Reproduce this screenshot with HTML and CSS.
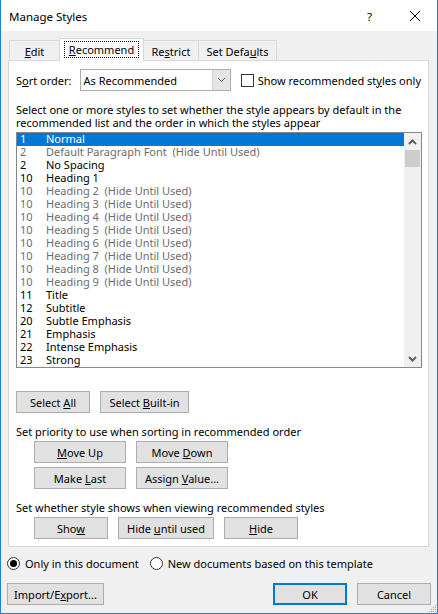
FILE: index.html
```html
<!DOCTYPE html>
<html>
<head>
<meta charset="utf-8">
<link rel="stylesheet" href="styles.css">
</head>
<body>
<div class="window">
  <div class="titlebar">
    <span class="title">Manage Styles</span>
    <span class="help">?</span>
    <svg class="close" width="12" height="12" viewBox="0 0 12 12"><path d="M1 1L11 11M11 1L1 11" stroke="#000" stroke-width="1" fill="none"/></svg>
  </div>
  <div class="tabs">
    <div class="tab"><span><u>E</u>dit</span></div>
    <div class="tab active"><span class="focus"><u>R</u>ecommend</span></div>
    <div class="tab"><span>Re<u>s</u>trict</span></div>
    <div class="tab"><span>Set Defa<u>u</u>lts</span></div>
  </div>
  <div class="panel">
    <div class="sort-row">
      <span class="sort-label">S<u>o</u>rt order:</span>
      <div class="select">
        <span class="select-value">As Recommended</span>
        <span class="select-btn"><svg width="9" height="6" viewBox="0 0 9 6"><path d="M1 1L4.5 4.5L8 1" stroke="#5a5a5a" stroke-width="1" fill="none"/></svg></span>
      </div>
      <span class="checkbox"></span>
      <span class="check-label">Show recommended st<u>y</u>les only</span>
    </div>
    <p class="desc">Select one or more styles to set whether the style appears by default in the<br>recommended list and the order in which the styles appear</p>
    <div class="listbox">
      <div class="rows">
        <div class="row selected"><span class="num">1</span><span class="name">Normal</span></div>
        <div class="row gray"><span class="num">2</span><span class="name">Default Paragraph Font  (Hide Until Used)</span></div>
        <div class="row"><span class="num">2</span><span class="name">No Spacing</span></div>
        <div class="row"><span class="num">10</span><span class="name">Heading 1</span></div>
        <div class="row gray"><span class="num">10</span><span class="name">Heading 2  (Hide Until Used)</span></div>
        <div class="row gray"><span class="num">10</span><span class="name">Heading 3  (Hide Until Used)</span></div>
        <div class="row gray"><span class="num">10</span><span class="name">Heading 4  (Hide Until Used)</span></div>
        <div class="row gray"><span class="num">10</span><span class="name">Heading 5  (Hide Until Used)</span></div>
        <div class="row gray"><span class="num">10</span><span class="name">Heading 6  (Hide Until Used)</span></div>
        <div class="row gray"><span class="num">10</span><span class="name">Heading 7  (Hide Until Used)</span></div>
        <div class="row gray"><span class="num">10</span><span class="name">Heading 8  (Hide Until Used)</span></div>
        <div class="row gray"><span class="num">10</span><span class="name">Heading 9  (Hide Until Used)</span></div>
        <div class="row"><span class="num">11</span><span class="name">Title</span></div>
        <div class="row"><span class="num">12</span><span class="name">Subtitle</span></div>
        <div class="row"><span class="num">20</span><span class="name">Subtle Emphasis</span></div>
        <div class="row"><span class="num">21</span><span class="name">Emphasis</span></div>
        <div class="row"><span class="num">22</span><span class="name">Intense Emphasis</span></div>
        <div class="row"><span class="num">23</span><span class="name">Strong</span></div>
      </div>
      <div class="scrollbar">
        <span class="arrow"><svg width="9" height="6" viewBox="0 0 9 6"><path d="M1 5L4.5 1.5L8 5" stroke="#606060" stroke-width="2" fill="none"/></svg></span>
        <span class="thumb"></span>
        <span class="track"></span>
        <span class="arrow"><svg width="9" height="6" viewBox="0 0 9 6"><path d="M1 1L4.5 4.5L8 1" stroke="#606060" stroke-width="2" fill="none"/></svg></span>
      </div>
    </div>
    <div class="btn-row first">
      <button class="btn w74">Select <u>A</u>ll</button>
      <button class="btn w89">Select <u>B</u>uilt-in</button>
    </div>
    <p class="label">Set priority to use when sorting in recommended order</p>
    <div class="btn-grid">
      <button class="btn w92"><u>M</u>ove Up</button>
      <button class="btn w92">Move <u>D</u>own</button>
      <button class="btn w92">Make <u>L</u>ast</button>
      <button class="btn w92">Assign <u>V</u>alue...</button>
    </div>
    <p class="label">Set whether style shows when viewing recommended styles</p>
    <div class="btn-row indent">
      <button class="btn w74">Sho<u>w</u></button>
      <button class="btn w96">Hide <u>u</u>ntil used</button>
      <button class="btn w74"><u>H</u>ide</button>
    </div>
  </div>
  <div class="radios">
    <span class="radio checked"></span>
    <span class="radio-label">Only in this document</span>
    <span class="radio second"></span>
    <span class="radio-label">New documents based on this template</span>
  </div>
  <div class="footer">
    <button class="btn w97">Import/E<u>x</u>port...</button>
    <span class="spacer"></span>
    <button class="btn w74 default">OK</button>
    <button class="btn w74">Cancel</button>
  </div>
  <svg class="grip" width="9" height="9" viewBox="0 0 9 9">
    <rect x="7" y="1" width="1" height="1" fill="#a0a0a0"/>
    <rect x="5" y="3" width="1" height="1" fill="#a0a0a0"/>
    <rect x="7" y="3" width="1" height="1" fill="#a0a0a0"/>
    <rect x="3" y="5" width="1" height="1" fill="#a0a0a0"/>
    <rect x="5" y="5" width="1" height="1" fill="#a0a0a0"/>
    <rect x="7" y="5" width="1" height="1" fill="#a0a0a0"/>
    <rect x="1" y="7" width="1" height="1" fill="#a0a0a0"/>
    <rect x="3" y="7" width="1" height="1" fill="#a0a0a0"/>
    <rect x="5" y="7" width="1" height="1" fill="#a0a0a0"/>
    <rect x="7" y="7" width="1" height="1" fill="#a0a0a0"/>
  </svg>
</div>
</body>
</html>
```
FILE: styles.css
```css
html, body {
  margin: 0;
  padding: 0;
  background: #ffffff;
}
body {
  font-family: "Noto Sans", "Open Sans", sans-serif;
  font-size: 11px;
  color: #000;
}
u { text-decoration: underline; text-underline-offset: 1px; }
.window {
  position: relative;
  width: 438px;
  height: 614px;
  box-sizing: border-box;
  border: 1px solid #1883d7;
  border-top: none;
  background: #f0f0f0;
  display: flex;
  flex-direction: column;
}
.titlebar {
  height: 31px;
  background: #fff;
  display: flex;
  align-items: center;
  padding-left: 8px;
  flex-shrink: 0;
  font-size: 11.5px;
}
.title { flex: 1; line-height: 13px; margin-top: 1px; }
.help { width: 6px; margin-right: 36px; line-height: 13px; margin-top: 1px; }
.close { margin-right: 16px; }
.tabs {
  display: flex;
  align-items: flex-end;
  padding-left: 8px;
  margin-top: 7px;
  height: 22px;
  position: relative;
  z-index: 2;
  white-space: nowrap;
}
.tab {
  box-sizing: border-box;
  height: 20px;
  border: 1px solid #d9d9d9;
  border-bottom: none;
  border-right: none;
  background: #f0f0f0;
  line-height: 13px;
  display: flex;
  align-items: center;
  justify-content: center;
  padding-top: 2px;
}
.tab:nth-child(1) { width: 50px; }
.tab:nth-child(3) { width: 54px; border-left: none; }
.tab:nth-child(4) { width: 79px; border-right: 1px solid #d9d9d9; }
.tab.active {
  width: 85px;
  height: 23px;
  margin-bottom: -1px;
  background: #fff;
  border-right: 1px solid #d9d9d9;
  align-items: flex-start;
  padding-top: 3px;
}
.focus {
  outline: 1px dotted #000;
  outline-offset: 0;
  padding: 1px 4px 0 4px;
  line-height: 14px;
}
.panel {
  box-sizing: border-box;
  height: 487px;
  margin: 0 8px 0 7px;
  background: #fff;
  border: 1px solid #d9d9d9;
  padding: 8px 7px 0 7px;
  position: relative;
  z-index: 1;
}
.sort-row {
  display: flex;
  align-items: center;
  height: 22px;
  white-space: nowrap;
}
.sort-label { width: 64px; }
.select {
  box-sizing: border-box;
  width: 152px;
  height: 22px;
  border: 1px solid #adadad;
  display: flex;
  align-items: center;
}
.select-value { flex: 1; padding-left: 3px; }
.select-btn {
  width: 17px;
  height: 20px;
  background: #e5e5e5;
  border-left: 1px solid #cfcfcf;
  display: flex;
  align-items: center;
  justify-content: center;
}
.checkbox {
  box-sizing: border-box;
  width: 13px;
  height: 13px;
  border: 1px solid #333;
  background: #fff;
  margin-left: 10px;
  flex-shrink: 0;
}
.check-label { margin-left: 4px; }
.desc {
  margin: 12px 0 0 0;
  line-height: 13px;
  white-space: nowrap;
}
.listbox {
  box-sizing: border-box;
  margin-top: 3px;
  width: 406px;
  height: 236px;
  border: 1px solid #828790;
  display: flex;
}
.rows { flex: 1; }
.row {
  height: 13px;
  line-height: 12px;
  padding-bottom: 1px;
  box-sizing: border-box;
  display: flex;
  white-space: pre;
}
.row .num { width: 29px; padding-left: 3px; box-sizing: border-box; }
.row.selected { background: #0078d7; color: #fff; }
.row.gray { color: #6d6d6d; }
.scrollbar {
  width: 17px;
  background: #f0f0f0;
  display: flex;
  flex-direction: column;
}
.arrow {
  height: 17px;
  display: flex;
  align-items: center;
  justify-content: center;
}
.thumb { height: 17px; background: #cdcdcd; margin: 0 1px; }
.track { flex: 1; }
.btn {
  box-sizing: border-box;
  height: 22px;
  padding: 0;
  margin: 0;
  border: 1px solid #adadad;
  background: #e1e1e1;
  font-family: inherit;
  font-size: 11px;
  color: #000;
  line-height: 13px;
  white-space: nowrap;
}
.w74 { width: 74px; }
.w89 { width: 89px; }
.w92 { width: 92px; }
.w96 { width: 96px; }
.w97 { width: 97px; }
.btn.default { border: 2px solid #0078d7; }
.btn-row { display: flex; gap: 10px; }
.btn-row.first { margin-top: 23px; }
.btn-row.indent { margin-left: 18px; margin-top: 3px; }
.label { margin: 12px 0 0 0; line-height: 13px; }
.btn-grid {
  display: grid;
  grid-template-columns: 92px 92px;
  column-gap: 10px;
  row-gap: 4px;
  margin: 3px 0 0 18px;
}
.radios {
  display: flex;
  align-items: center;
  height: 13px;
  margin-top: 10px;
  padding-left: 6px;
  line-height: 13px;
  white-space: nowrap;
}
.radio {
  box-sizing: border-box;
  width: 13px;
  height: 13px;
  border: 1px solid #333;
  border-radius: 50%;
  background: #fff;
  position: relative;
  flex-shrink: 0;
}
.radio.checked::after {
  content: "";
  position: absolute;
  left: 2px;
  top: 2px;
  width: 7px;
  height: 7px;
  border-radius: 50%;
  background: #000;
}
.radio.second { margin-left: 11px; }
.radio-label { margin-left: 5px; }
.footer {
  display: flex;
  gap: 10px;
  margin-top: 13px;
  padding: 0 6px 0 6px;
}
.spacer { flex: 1; }
.grip { position: absolute; right: 0; bottom: 0; }
```
